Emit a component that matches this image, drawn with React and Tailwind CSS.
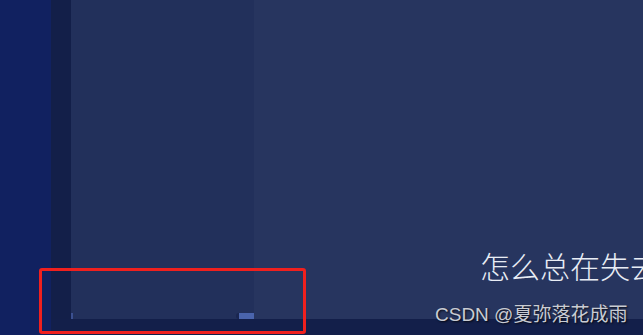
export default function App() {
  return (
    <div className="relative flex h-[335px] w-[643px] overflow-hidden bg-[#112160]" style={{ fontFamily: '"Noto Sans CJK SC", "Noto Sans", sans-serif' }}>
      <div className="w-[51px] shrink-0 bg-[#112160]" />
      <div className="flex flex-1 flex-col">
        <div className="flex h-[319px]">
          <div className="w-[20px] shrink-0 bg-[#131f49]" />
          <div className="flex w-[183px] shrink-0 flex-col justify-end bg-[#22305b]">
            <div className="flex h-[6px] items-center justify-between">
              <div className="h-[6px] w-[2px] bg-[#3b5090]" />
              <div className="flex h-[6px] items-center">
                <div className="h-[6px] w-[3px] rounded-l-full bg-[#1a2650]" />
                <div className="h-[6px] w-[15px] bg-[#4a64ac]" />
              </div>
            </div>
          </div>
          <div className="flex-1 overflow-hidden bg-[#27355f]">
            <div className="mt-[247px] whitespace-nowrap pl-[226px] text-[30px] font-light leading-[36px] text-[#e9edf5]">
              怎么总在失去
            </div>
          </div>
        </div>
        <div className="flex-1 bg-[#131f4a]" />
      </div>
      <div
        className="absolute left-[435px] top-[302px] whitespace-nowrap text-[19px] leading-[26px] text-[#c9ccd3]"
        style={{ fontFamily: '"Liberation Sans", "Noto Sans CJK SC", sans-serif', textShadow: '1px 1px 2px rgba(0,0,0,0.8)' }}
      >
        CSDN @夏弥落花成雨
      </div>
      <div className="pointer-events-none absolute left-[39px] top-[268px] h-[66px] w-[267px] rounded-[3px] border-[3px] border-[#f0201e]" />
    </div>
  );
}
